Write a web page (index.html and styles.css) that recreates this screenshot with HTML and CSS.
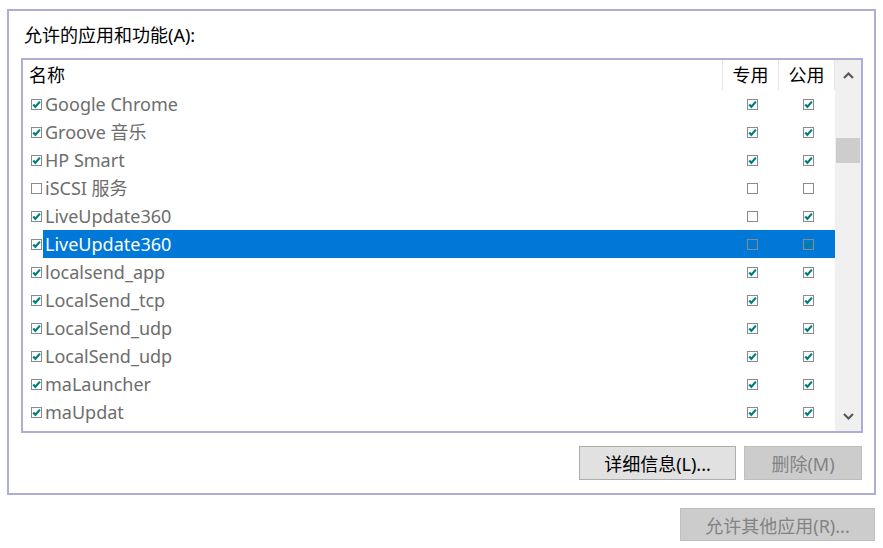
FILE: index.html
```html
<!DOCTYPE html>
<html lang="zh-CN">
<head>
    <meta charset="UTF-8">
    <title>允许的应用</title>
    <link rel="stylesheet" href="styles.css">
</head>
<body>
    <div class="group">
        <div class="caption">允许的应用和功能(A):</div>
        <div class="listbox">
            <div class="list">
                <div class="list-head">
                    <div class="col-name">名称</div>
                    <div class="col-chk">专用</div>
                    <div class="col-chk">公用</div>
                </div>
                <div class="rows" id="rows"></div>
            </div>
            <div class="scrollbar">
                <div class="sb-btn">
                    <svg width="11" height="7" viewBox="0 0 11 7"><path d="M1 6 L5.5 1.5 L10 6" fill="none" stroke="#5a5a5a" stroke-width="2.2"/></svg>
                </div>
                <div class="sb-track">
                    <div class="sb-thumb"></div>
                </div>
                <div class="sb-btn">
                    <svg width="11" height="7" viewBox="0 0 11 7"><path d="M1 1 L5.5 5.5 L10 1" fill="none" stroke="#5a5a5a" stroke-width="2.2"/></svg>
                </div>
            </div>
        </div>
        <div class="actions">
            <button class="btn btn-details">详细信息(L)...</button>
            <button class="btn btn-remove" disabled>删除(M)</button>
        </div>
    </div>
    <div class="footer">
        <button class="btn btn-allow" disabled>允许其他应用(R)...</button>
    </div>
    <script>
        // name, enabled, private, public
        const apps = [
            ['Google Chrome', 1, 1, 1],
            ['Groove 音乐', 1, 1, 1],
            ['HP Smart', 1, 1, 1],
            ['iSCSI 服务', 0, 0, 0],
            ['LiveUpdate360', 1, 0, 1],
            ['LiveUpdate360', 1, 0, 1, true],
            ['localsend_app', 1, 1, 1],
            ['LocalSend_tcp', 1, 1, 1],
            ['LocalSend_udp', 1, 1, 1],
            ['LocalSend_udp', 1, 1, 1],
            ['maLauncher', 1, 1, 1],
            ['maUpdat', 1, 1, 1],
            ['', 1, 1, 1]
        ]

        const check = '<svg width="9" height="9" viewBox="0 0 9 9"><path d="M1.2 4.4 L3.4 6.8 L7.9 1.6" fill="none" stroke="#00807f" stroke-width="2.2"/></svg>'

        function box(on) {
            return '<span class="cb">' + (on ? check : '') + '</span>'
        }

        const rows = document.getElementById('rows')
        apps.forEach(a => {
            const row = document.createElement('div')
            row.className = 'row' + (a[4] ? ' selected' : '')
            row.innerHTML =
                '<div class="cell-cb">' + box(a[1]) + '</div>' +
                '<div class="cell-main">' +
                    '<div class="cell-name">' + a[0] + '</div>' +
                    '<div class="cell-chk">' + box(a[2]) + '</div>' +
                    '<div class="cell-chk">' + box(a[3]) + '</div>' +
                '</div>'
            rows.appendChild(row)
        })
    </script>
</body>
</html>
```

FILE: styles.css
```css
body {
    margin: 0;
    background: #fff;
    font-family: "Noto Sans", "Noto Sans CJK SC", sans-serif;
    font-size: 18px;
    color: #000;
}
.group {
    box-sizing: border-box;
    width: 869px;
    height: 486px;
    margin: 9px 0 0 7px;
    border: 2px solid #adadd6;
    padding: 12px 11px 0 12px;
}
.caption {
    height: 24px;
    line-height: 24px;
    margin: 0 0 11px 3px;
}
.listbox {
    box-sizing: border-box;
    height: 375px;
    border: 2px solid #adadd6;
    display: flex;
    overflow: hidden;
}
.list {
    flex: 1;
    overflow: hidden;
}
.list-head {
    display: flex;
    height: 30px;
    line-height: 31px;
}
.col-name {
    width: 693px;
    padding-left: 6px;
    border-right: 1px solid #e5e5e5;
}
.col-chk {
    width: 55px;
    text-align: center;
    border-right: 1px solid #e5e5e5;
}
.row {
    display: flex;
    height: 28px;
    line-height: 28px;
    color: #6d6d6d;
}
.cell-cb {
    width: 20px;
    display: flex;
    align-items: center;
    padding-left: 8px;
    box-sizing: border-box;
}
.cell-main {
    flex: 1;
    display: flex;
}
.cell-name {
    width: 677px;
    padding-left: 2px;
    white-space: nowrap;
}
.cell-chk {
    box-sizing: border-box;
    width: 56px;
    padding-left: 5px;
    display: flex;
    align-items: center;
    justify-content: center;
}
.cb {
    box-sizing: border-box;
    width: 11px;
    height: 11px;
    border: 1px solid #8a8a8a;
    background: #fff;
    display: flex;
    align-items: center;
    justify-content: center;
}
.selected .cell-main {
    background: #0078d7;
    color: #fff;
}
.selected .cell-main .cb {
    background: transparent;
}
.scrollbar {
    width: 26px;
    background: #f0f0f0;
    display: flex;
    flex-direction: column;
}
.sb-btn {
    height: 30px;
    display: flex;
    align-items: center;
    justify-content: center;
}
.sb-track {
    flex: 1;
    padding-top: 48px;
}
.sb-thumb {
    height: 25px;
    margin: 0 1px;
    background: #cdcdcd;
}
.actions {
    display: flex;
    justify-content: flex-end;
    gap: 8px;
    margin-top: 13px;
    padding-right: 1px;
}
.btn {
    box-sizing: border-box;
    height: 34px;
    font-family: inherit;
    font-size: 18px;
    border: 1px solid #adadad;
    background: #e1e1e1;
    color: #000;
    padding: 0;
}
.btn:disabled {
    background: #cccccc;
    border-color: #bfbfbf;
    color: #838383;
}
.btn-details {
    width: 157px;
}
.btn-remove {
    width: 118px;
}
.footer {
    display: flex;
    justify-content: flex-end;
    width: 876px;
    margin-top: 13px;
}
.btn-allow {
    width: 195px;
    height: 33px;
    margin-right: 1px;
}
```
